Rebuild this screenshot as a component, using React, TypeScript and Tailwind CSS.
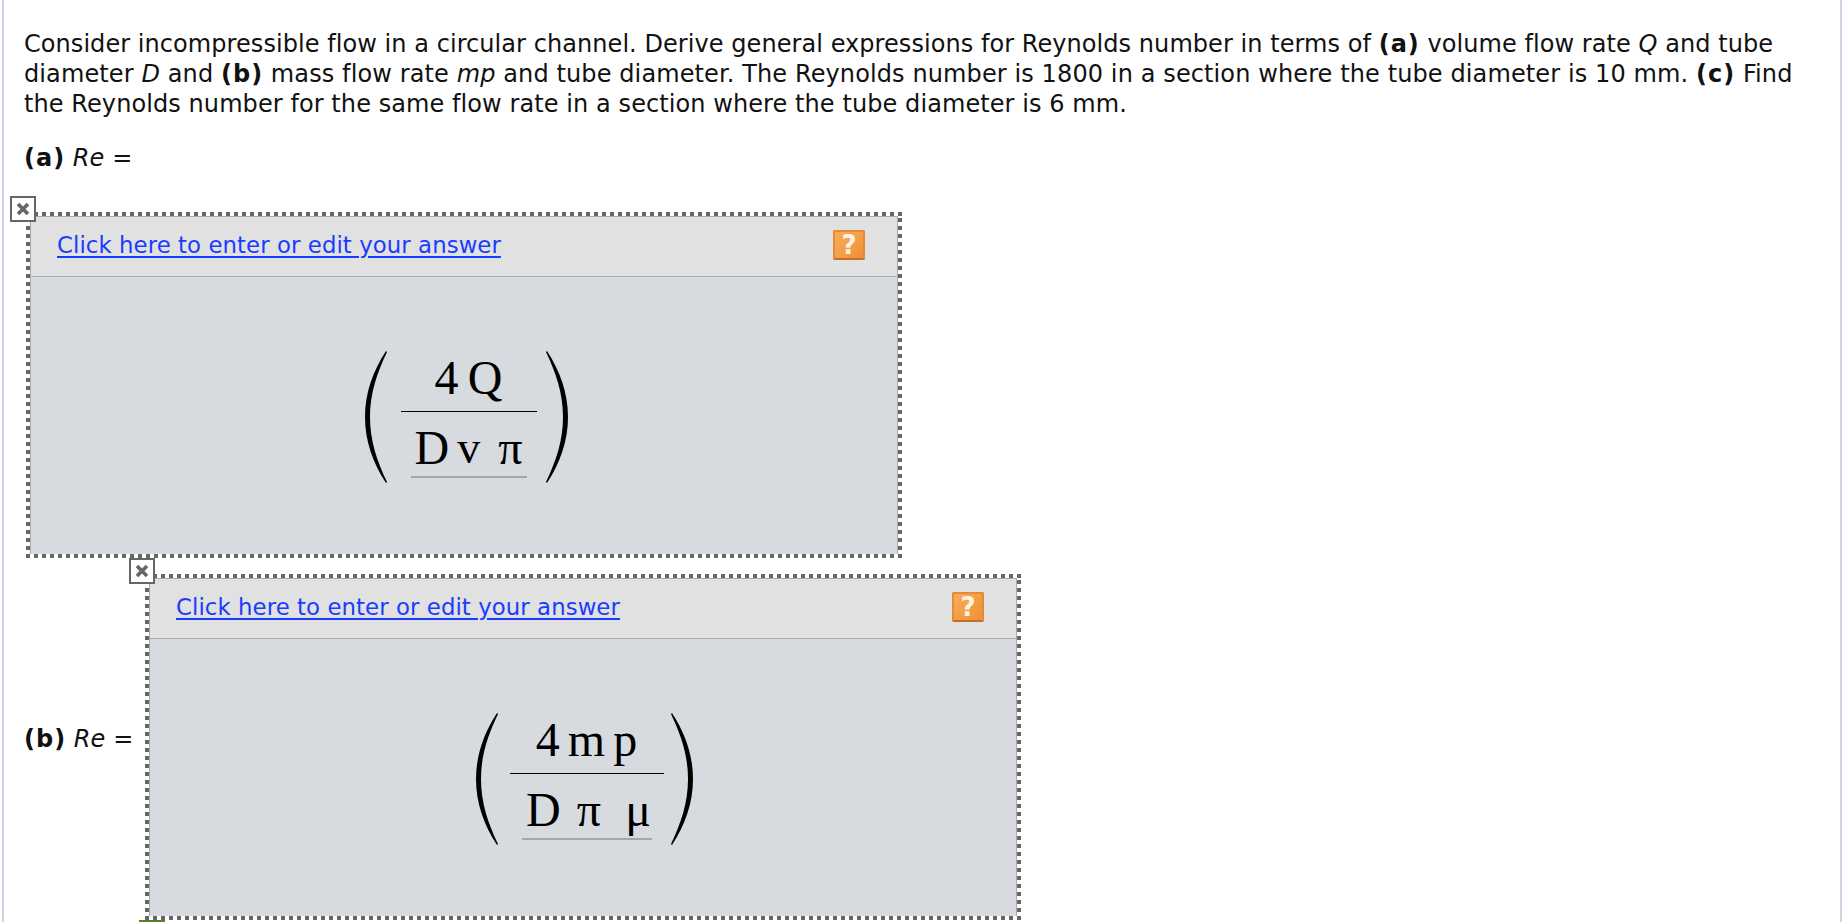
import type { ReactNode } from "react";

const dots =
  "[background:repeating-linear-gradient(90deg,#666_0_4px,transparent_4px_8px)_top/100%_4px_no-repeat,repeating-linear-gradient(90deg,#666_0_4px,transparent_4px_8px)_bottom/100%_4px_no-repeat,repeating-linear-gradient(0deg,#666_0_4px,transparent_4px_8px)_left/4px_100%_no-repeat,repeating-linear-gradient(0deg,#666_0_4px,transparent_4px_8px)_right/4px_100%_no-repeat]";

function Paren({ flip }: { flip?: boolean }) {
  return (
    <svg width="22" height="132" viewBox="0 0 22 132" className={flip ? "mt-[2px] -ml-[5px] -scale-x-100" : "mt-[2px]"}>
      <path d="M21 0C8 20 0 42 0 66C0 90 8 112 21 132L22 131C12 110 5 90 5 66C5 42 12 22 22 1Z" fill="#000" />
    </svg>
  );
}

function Formula({
  top,
  bottom,
  lineWidth,
  underWidth,
  topGap,
  gap,
}: {
  top: string[];
  bottom: ReactNode;
  lineWidth: string;
  underWidth: string;
  topGap: string;
  gap: string;
}) {
  return (
    <div className={`flex items-center ${gap} font-['Liberation_Serif',serif] text-[48px] text-black`}>
      <Paren />
      <div className={`mb-[4px] flex flex-col items-center ${lineWidth}`}>
        <div className={`flex h-[61px] items-end justify-center ${topGap} pb-[3px] leading-[60px]`}>
          {top.map((t) => (
            <span key={t}>{t}</span>
          ))}
        </div>
        <div className="h-[1px] w-full bg-black" />
        <div className="flex h-[64px] items-center justify-center pt-[9px] leading-[60px]">{bottom}</div>
        <div className={`h-[2px] ${underWidth} bg-[#a6a6a6]`} />
      </div>
      <Paren flip />
    </div>
  );
}

function AnswerBox({ children }: { children: ReactNode }) {
  return (
    <div className={`relative h-[346px] w-[876px] p-[4px] ${dots}`}>
      {/* Close */}
      <div className="absolute top-[-16px] left-[-16px] flex h-[26px] w-[26px] items-center justify-center border-2 border-[#666] bg-white">
        <svg width="16" height="16" viewBox="0 0 16 16">
          <path d="M3 3L13 13M13 3L3 13" stroke="#666" strokeWidth="3.6" />
        </svg>
      </div>
      <div className="flex h-full flex-col border-x border-t border-[#aaa] bg-[#d7dade]">
        <div className="flex h-[60px] items-center justify-between border-b border-[#aaa] bg-[#e1e1e1] pr-[32px] pb-[4px] pl-[26px]">
          <a className="text-[22.8px] leading-[26px] text-[#1a3cff] underline underline-offset-[3px]">
            Click here to enter or edit your answer
          </a>
          <div className="flex h-[30px] w-[32px] items-center justify-center rounded-[2px] border-2 border-[#e58b38] border-b-[#c46f26] bg-gradient-to-br from-[#f8ad57] to-[#ee9038] text-[26px] leading-none font-bold text-[#fff4e4]">
            ?
          </div>
        </div>
        <div className="flex flex-1 items-center justify-center">{children}</div>
      </div>
    </div>
  );
}

export default function App() {
  return (
    <div className="h-[922px] overflow-hidden bg-white">
      <div className="ml-[2px] h-full w-[1840px] border-x-2 border-[#ccd6e4] pt-[29px] pl-[20px] font-['DejaVu_Sans',sans-serif] text-[24px] leading-[30px] tracking-[0.08px] text-[#111]">
        <div className="tracking-[0.06px] whitespace-nowrap">
          Consider incompressible flow in a circular channel. Derive general expressions for Reynolds number in terms of{" "}
          <b className="tracking-[1px]">(a)</b> volume flow rate <i>Q</i> and tube
        </div>
        <div className="tracking-[0.11px] whitespace-nowrap">
          diameter <i>D</i> and <b className="tracking-[1px]">(b)</b> mass flow rate <i>mp</i> and tube diameter. The
          Reynolds number is 1800 in a section where the tube diameter is 10 mm. <b className="tracking-[1px]">(c)</b> Find
        </div>
        <div className="whitespace-nowrap">
          the Reynolds number for the same flow rate in a section where the tube diameter is 6 mm.
        </div>
        <p className="mt-[24px]">
          <b className="tracking-[1px]">(a)</b> <i>Re</i> =
        </p>
        <div className="mt-[39px] ml-[2px]">
          <AnswerBox>
            <div className="ml-[4px]">
              <Formula
                top={["4", "Q"]}
                bottom={
                  <>
                    <span className="mr-[8px]">D</span>
                    <span className="mr-[18px] text-[46px]">v</span>
                    <span>π</span>
                  </>
                }
                lineWidth="w-[136px]"
                underWidth="w-[116px]"
                topGap="gap-[9px]"
                gap="gap-[14px]"
              />
            </div>
          </AnswerBox>
        </div>
        <div className="mt-[16px] flex items-center">
          <div className="w-[121px] pb-[16px]">
            <b className="tracking-[1px]">(b)</b> <i>Re</i> =
          </div>
          <AnswerBox>
            <div className="ml-[2px]">
              <Formula
                top={["4", "m", "p"]}
                bottom={
                  <>
                    <span className="mr-[16px] ml-[4px]">D</span>
                    <span className="mr-[24px]">π</span>
                    <span>μ</span>
                  </>
                }
                lineWidth="w-[154px]"
                underWidth="w-[130px]"
                topGap="gap-[8px]"
                gap="gap-[12px]"
              />
            </div>
          </AnswerBox>
        </div>
        <div className="ml-[115px] h-[2px] w-[26px] bg-[#5a7f1e]" />
      </div>
    </div>
  );
}
